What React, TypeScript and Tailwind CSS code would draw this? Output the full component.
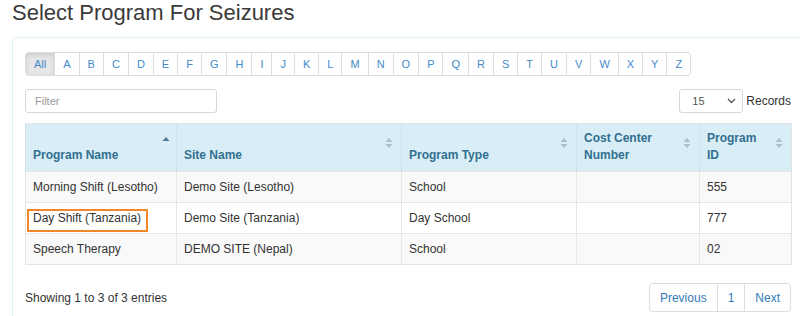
import React from "react";

const letters = ["All", ..."ABCDEFGHIJKLMNOPQRSTUVWXYZ".split("")];

const rows = [
  { name: "Morning Shift (Lesotho)", site: "Demo Site (Lesotho)", type: "School", cost: "", id: "555" },
  { name: "Day Shift (Tanzania)", site: "Demo Site (Tanzania)", type: "Day School", cost: "", id: "777", marked: true },
  { name: "Speech Therapy", site: "DEMO SITE (Nepal)", type: "School", cost: "", id: "02" },
];

const SortBoth = () => (
  <svg width="8" height="12" viewBox="0 0 8 12" className="absolute right-[8px] top-[13px]">
    <path d="M4 1 L7.5 5 L0.5 5 Z" fill="#a9bfcc" />
    <path d="M4 11 L7.5 7 L0.5 7 Z" fill="#a9bfcc" />
  </svg>
);

const SortAsc = () => (
  <svg width="8" height="12" viewBox="0 0 8 12" className="absolute right-[6px] top-[11px]">
    <path d="M4 2 L7.5 6 L0.5 6 Z" fill="#4f7a95" />
  </svg>
);

const headers = [
  { label: "Program Name", w: "w-[151px]", asc: true },
  { label: "Site Name", w: "w-[225px]" },
  { label: "Program Type", w: "w-[175px]" },
  { label: "Cost Center Number", w: "w-[123px]" },
  { label: "Program ID", w: "w-[92px]" },
];

export default function App() {
  return (
    <div
      className="w-[800px] h-[316px] overflow-hidden bg-white text-[#333]"
      style={{ fontFamily: '"Liberation Sans", Arial, sans-serif' }}
    >
      <h1 className="pl-3 text-[22px] leading-[26px] font-normal text-[#3a3a3a]">Select Program For Seizures</h1>

      <div className="ml-3 mt-[11px] w-[792px] h-[300px] rounded-[4px] border border-[#dff3f8] px-3 pt-[14px]">
        {/* alphabet filter */}
        <div className="flex">
          {letters.map((l, i) => (
            <button
              key={l}
              className={
                "h-6 px-2 text-[11px] leading-none border border-[#ddd] text-[#428bca] " +
                (i > 0 ? "-ml-px " : "") +
                (i === 0
                  ? "bg-[#e6e6e6] rounded-l-[4px] shadow-[inset_0_2px_4px_rgba(0,0,0,0.12)] text-[#3b7fc0]"
                  : "bg-white") +
                (i === letters.length - 1 ? " rounded-r-[4px]" : "")
              }
            >
              {l}
            </button>
          ))}
        </div>

        {/* filter / records */}
        <div className="mt-[13px] flex items-center justify-between">
          <div className="w-[192px] h-6 rounded-[3px] border border-[#d7d7d7] flex items-center pl-[9px] text-[11px] text-[#999]">
            Filter
          </div>
          <div className="flex items-center">
            <div className="w-16 h-6 rounded-[3px] border border-[#d7d7d7] flex items-center justify-between pl-3 pr-[6px] text-[11px] text-[#555]">
              <span>15</span>
              <svg width="9" height="6" viewBox="0 0 9 6">
                <path d="M1 1 L4.5 4.5 L8 1" fill="none" stroke="#555" strokeWidth="1.3" />
              </svg>
            </div>
            <span className="ml-[3px] text-[12px] text-[#333]">Records</span>
          </div>
        </div>

        {/* table */}
        <table className="mt-[10px] w-[766px] table-fixed border-collapse border border-[#e3e3e3] text-[12px]">
          <thead>
            <tr className="bg-[#d9edf7] h-[48px]">
              {headers.map((h) => (
                <th
                  key={h.label}
                  className={
                    h.w +
                    " relative align-bottom text-left font-bold text-[#31708f] leading-[17px] pl-[7px] pr-[30px] pb-[7px] border-l border-[#d0e3ec]"
                  }
                >
                  {h.label}
                  {h.asc ? <SortAsc /> : <SortBoth />}
                </th>
              ))}
            </tr>
          </thead>
          <tbody>
            {rows.map((r, i) => (
              <tr key={r.id} className={"h-[31px] border-t border-[#e6e6e6] " + (i % 2 === 0 ? "bg-[#f9f9f9]" : "bg-white")}>
                <td className="relative pl-[7px] pr-2 text-[#333] border-l border-[#e6e6e6]">
                  {r.name}
                  {r.marked && (
                    <div className="absolute left-[1px] top-[6px] w-[121px] h-[23px] border-2 border-[#f0882a]" />
                  )}
                </td>
                <td className="pl-[7px] pr-2 text-[#333] border-l border-[#e6e6e6]">{r.site}</td>
                <td className="pl-[7px] pr-2 text-[#333] border-l border-[#e6e6e6]">{r.type}</td>
                <td className="pl-[7px] pr-2 text-[#333] border-l border-[#e6e6e6]">{r.cost}</td>
                <td className="pl-[7px] pr-2 text-[#333] border-l border-[#e6e6e6]">{r.id}</td>
              </tr>
            ))}
          </tbody>
        </table>

        {/* footer */}
        <div className="mt-[18px] w-[766px] flex items-center justify-between">
          <span className="text-[12px] text-[#333]">Showing 1 to 3 of 3 entries</span>
          <div className="flex h-[29px] text-[12px] text-[#337ab7]">
            <span className="px-[10px] flex items-center border border-[#ddd] rounded-l-[4px]">Previous</span>
            <span className="-ml-px px-[10px] flex items-center border border-[#ddd]">1</span>
            <span className="-ml-px px-[10px] flex items-center border border-[#ddd] rounded-r-[4px]">Next</span>
          </div>
        </div>
      </div>
    </div>
  );
}
